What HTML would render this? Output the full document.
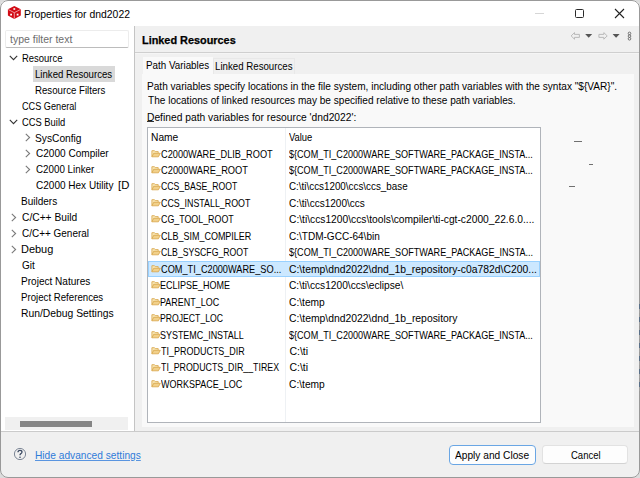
<!DOCTYPE html>
<html><head><meta charset="utf-8">
<style>
html,body{margin:0;padding:0;}
body{width:640px;height:478px;position:relative;overflow:hidden;background:#dcdcdc;font-family:"Liberation Sans",sans-serif;}
.win{position:absolute;left:0;top:0;width:640px;height:478px;border-radius:8px;background:#f0f0f0;overflow:hidden;}
.bord{position:absolute;left:0;top:0;width:640px;height:478px;box-sizing:border-box;border:1px solid #999;border-radius:8px;}
.a{position:absolute;box-sizing:border-box;}
.t{position:absolute;white-space:pre;line-height:24px;height:24px;transform-origin:0 0;font-family:"Liberation Sans",sans-serif;}
</style></head><body>
<div class="win">
  <div class="a" style="left:0;top:0;width:640px;height:26px;background:#fff;"></div>
  <div class="a" style="left:0;top:26px;width:134px;height:405px;background:#fff;"></div>
  <div class="a" style="left:134px;top:26px;width:1px;height:405px;background:#c4c4c4;"></div>
<!-- absolute coords relative to body -->
<svg class="a" style="left:7px;top:5px" width="15" height="15" viewBox="0 0 15 15"><path d="M7.3 0.9 L13.8 4.3 L13.8 10.5 L7.3 13.9 L0.9 10.5 L0.9 4.3 Z" fill="#d20a14"/><path d="M1.2 4.5 L7.3 7.7 L13.5 4.5 M7.3 7.7 V13.6" fill="none" stroke="#f7b9bc" stroke-width="0.8"/><rect x="6.4" y="3.2" width="1.8" height="1.6" fill="#fff"/><rect x="3.2" y="8.7" width="1.8" height="1.8" fill="#fff"/><rect x="9.7" y="8.7" width="1.8" height="1.8" fill="#fff"/></svg>
<!-- window controls -->
<div class="a" style="left:535px;top:13px;width:9px;height:1px;background:#d6d6d6;"></div>
<div class="a" style="left:574.5px;top:8.5px;width:9px;height:9px;border:1.1px solid #2b2b2b;border-radius:1.5px;"></div>
<svg class="a" style="left:614px;top:8px" width="11" height="11" viewBox="0 0 11 11"><path d="M1 1 L10 10 M10 1 L1 10" stroke="#222" stroke-width="1.1"/></svg>

<!-- right panel -->
<div class="a" style="left:135px;top:26px;width:505px;height:405px;background:#f0f0f0;"></div>
<div class="a" style="left:135px;top:51.5px;width:504px;height:1.3px;background:#cfcfcf;"></div><div class="a" style="left:135px;top:53px;width:504px;height:1px;background:#f5f5f5;"></div>
<!-- nav icons -->
<svg class="a" style="left:570px;top:32px" width="64" height="10" viewBox="0 0 64 10">
  <path d="M1.1 3.9 L4.5 0.6 V2.4 H9.4 V5.4 H4.5 V7.2 Z" fill="none" stroke="#b4b4b4" stroke-width="0.9" stroke-linejoin="round"/>
  <path d="M15.2 2 L22.2 2 L18.7 5.8 Z" fill="#555"/>
  <path d="M37.2 3.9 L33.8 0.6 V2.4 H28.9 V5.4 H33.8 V7.2 Z" fill="none" stroke="#b4b4b4" stroke-width="0.9" stroke-linejoin="round"/>
  <path d="M42.6 2 L49.6 2 L46.1 5.8 Z" fill="#555"/>
</svg>
<svg class="a" style="left:626px;top:31px" width="7" height="11" viewBox="0 0 7 11">
  <circle cx="3.5" cy="2.4" r="1.3" fill="none" stroke="#666" stroke-width="0.9"/>
  <circle cx="3.5" cy="5.1" r="1.3" fill="none" stroke="#666" stroke-width="0.9"/>
  <circle cx="3.5" cy="7.8" r="1.3" fill="none" stroke="#666" stroke-width="0.9"/>
</svg>
<!-- tab folder -->
<div class="a" style="left:142px;top:74px;width:492px;height:353px;background:#f9f9f9;"></div>
<div class="a" style="left:143px;top:57px;width:70px;height:17px;background:#f9f9f9;"></div>
<div class="a" style="left:213px;top:58px;width:82px;height:16px;background:#f0f0f0;border:1px solid #e8e8e8;border-bottom:none;"></div>
<!-- table -->
<div class="a" style="left:147px;top:127px;width:394px;height:296px;background:#fff;border:1px solid #b0b4ba;"></div>
<div class="a" style="left:285px;top:128px;width:1px;height:294px;background:#eef1f4;"></div>
<div class="a" style="left:148px;top:261px;width:392px;height:16px;background:#cce8ff;border:1px solid #99d1ff;"></div>
<!-- folders -->
<svg class="a" style="left:150.5px;top:149.60px" width="10" height="8" viewBox="0 0 10 8"><path d="M0.9 6.7 V0.7 H3.5 L4.4 1.6 H7.2 V3.2" fill="#f8e6b4" stroke="#d9a84e" stroke-width="0.85"/><path d="M0.9 6.8 L2.7 3.3 H9.3 L7.4 6.8 Z" fill="#f1d08a" stroke="#d9a84e" stroke-width="0.85"/></svg>
<svg class="a" style="left:150.5px;top:166.06px" width="10" height="8" viewBox="0 0 10 8"><path d="M0.9 6.7 V0.7 H3.5 L4.4 1.6 H7.2 V3.2" fill="#f8e6b4" stroke="#d9a84e" stroke-width="0.85"/><path d="M0.9 6.8 L2.7 3.3 H9.3 L7.4 6.8 Z" fill="#f1d08a" stroke="#d9a84e" stroke-width="0.85"/></svg>
<svg class="a" style="left:150.5px;top:182.52px" width="10" height="8" viewBox="0 0 10 8"><path d="M0.9 6.7 V0.7 H3.5 L4.4 1.6 H7.2 V3.2" fill="#f8e6b4" stroke="#d9a84e" stroke-width="0.85"/><path d="M0.9 6.8 L2.7 3.3 H9.3 L7.4 6.8 Z" fill="#f1d08a" stroke="#d9a84e" stroke-width="0.85"/></svg>
<svg class="a" style="left:150.5px;top:198.98px" width="10" height="8" viewBox="0 0 10 8"><path d="M0.9 6.7 V0.7 H3.5 L4.4 1.6 H7.2 V3.2" fill="#f8e6b4" stroke="#d9a84e" stroke-width="0.85"/><path d="M0.9 6.8 L2.7 3.3 H9.3 L7.4 6.8 Z" fill="#f1d08a" stroke="#d9a84e" stroke-width="0.85"/></svg>
<svg class="a" style="left:150.5px;top:215.44px" width="10" height="8" viewBox="0 0 10 8"><path d="M0.9 6.7 V0.7 H3.5 L4.4 1.6 H7.2 V3.2" fill="#f8e6b4" stroke="#d9a84e" stroke-width="0.85"/><path d="M0.9 6.8 L2.7 3.3 H9.3 L7.4 6.8 Z" fill="#f1d08a" stroke="#d9a84e" stroke-width="0.85"/></svg>
<svg class="a" style="left:150.5px;top:231.90px" width="10" height="8" viewBox="0 0 10 8"><path d="M0.9 6.7 V0.7 H3.5 L4.4 1.6 H7.2 V3.2" fill="#f8e6b4" stroke="#d9a84e" stroke-width="0.85"/><path d="M0.9 6.8 L2.7 3.3 H9.3 L7.4 6.8 Z" fill="#f1d08a" stroke="#d9a84e" stroke-width="0.85"/></svg>
<svg class="a" style="left:150.5px;top:248.36px" width="10" height="8" viewBox="0 0 10 8"><path d="M0.9 6.7 V0.7 H3.5 L4.4 1.6 H7.2 V3.2" fill="#f8e6b4" stroke="#d9a84e" stroke-width="0.85"/><path d="M0.9 6.8 L2.7 3.3 H9.3 L7.4 6.8 Z" fill="#f1d08a" stroke="#d9a84e" stroke-width="0.85"/></svg>
<svg class="a" style="left:150.5px;top:264.82px" width="10" height="8" viewBox="0 0 10 8"><path d="M0.9 6.7 V0.7 H3.5 L4.4 1.6 H7.2 V3.2" fill="#f8e6b4" stroke="#d9a84e" stroke-width="0.85"/><path d="M0.9 6.8 L2.7 3.3 H9.3 L7.4 6.8 Z" fill="#f1d08a" stroke="#d9a84e" stroke-width="0.85"/></svg>
<svg class="a" style="left:150.5px;top:281.28px" width="10" height="8" viewBox="0 0 10 8"><path d="M0.9 6.7 V0.7 H3.5 L4.4 1.6 H7.2 V3.2" fill="#f8e6b4" stroke="#d9a84e" stroke-width="0.85"/><path d="M0.9 6.8 L2.7 3.3 H9.3 L7.4 6.8 Z" fill="#f1d08a" stroke="#d9a84e" stroke-width="0.85"/></svg>
<svg class="a" style="left:150.5px;top:297.74px" width="10" height="8" viewBox="0 0 10 8"><path d="M0.9 6.7 V0.7 H3.5 L4.4 1.6 H7.2 V3.2" fill="#f8e6b4" stroke="#d9a84e" stroke-width="0.85"/><path d="M0.9 6.8 L2.7 3.3 H9.3 L7.4 6.8 Z" fill="#f1d08a" stroke="#d9a84e" stroke-width="0.85"/></svg>
<svg class="a" style="left:150.5px;top:314.20px" width="10" height="8" viewBox="0 0 10 8"><path d="M0.9 6.7 V0.7 H3.5 L4.4 1.6 H7.2 V3.2" fill="#f8e6b4" stroke="#d9a84e" stroke-width="0.85"/><path d="M0.9 6.8 L2.7 3.3 H9.3 L7.4 6.8 Z" fill="#f1d08a" stroke="#d9a84e" stroke-width="0.85"/></svg>
<svg class="a" style="left:150.5px;top:330.66px" width="10" height="8" viewBox="0 0 10 8"><path d="M0.9 6.7 V0.7 H3.5 L4.4 1.6 H7.2 V3.2" fill="#f8e6b4" stroke="#d9a84e" stroke-width="0.85"/><path d="M0.9 6.8 L2.7 3.3 H9.3 L7.4 6.8 Z" fill="#f1d08a" stroke="#d9a84e" stroke-width="0.85"/></svg>
<svg class="a" style="left:150.5px;top:347.12px" width="10" height="8" viewBox="0 0 10 8"><path d="M0.9 6.7 V0.7 H3.5 L4.4 1.6 H7.2 V3.2" fill="#f8e6b4" stroke="#d9a84e" stroke-width="0.85"/><path d="M0.9 6.8 L2.7 3.3 H9.3 L7.4 6.8 Z" fill="#f1d08a" stroke="#d9a84e" stroke-width="0.85"/></svg>
<svg class="a" style="left:150.5px;top:363.58px" width="10" height="8" viewBox="0 0 10 8"><path d="M0.9 6.7 V0.7 H3.5 L4.4 1.6 H7.2 V3.2" fill="#f8e6b4" stroke="#d9a84e" stroke-width="0.85"/><path d="M0.9 6.8 L2.7 3.3 H9.3 L7.4 6.8 Z" fill="#f1d08a" stroke="#d9a84e" stroke-width="0.85"/></svg>
<svg class="a" style="left:150.5px;top:380.04px" width="10" height="8" viewBox="0 0 10 8"><path d="M0.9 6.7 V0.7 H3.5 L4.4 1.6 H7.2 V3.2" fill="#f8e6b4" stroke="#d9a84e" stroke-width="0.85"/><path d="M0.9 6.8 L2.7 3.3 H9.3 L7.4 6.8 Z" fill="#f1d08a" stroke="#d9a84e" stroke-width="0.85"/></svg>
<!-- dashes -->
<div class="a" style="left:574px;top:140.5px;width:8px;height:1.3px;background:#707070;"></div>
<div class="a" style="left:589px;top:163.5px;width:4px;height:1.3px;background:#707070;"></div>
<div class="a" style="left:569px;top:186px;width:6px;height:1.3px;background:#707070;"></div>

<!-- left panel details -->
<div class="a" style="left:5px;top:30px;width:124px;height:18px;background:#fff;border:1px solid #ececec;border-bottom:1px solid #bcbcbc;border-radius:2px;"></div>
<div class="a" style="left:33px;top:66px;width:82px;height:16px;background:#d9d9d9;"></div>
<svg class="a" style="left:9.2px;top:55.3px" width="9" height="6" viewBox="0 0 9 6"><path d="M0.8 0.8 L4.5 4.6 L8.2 0.8" fill="none" stroke="#333" stroke-width="1.1"/></svg>
<svg class="a" style="left:9.2px;top:119.2px" width="9" height="6" viewBox="0 0 9 6"><path d="M0.8 0.8 L4.5 4.6 L8.2 0.8" fill="none" stroke="#333" stroke-width="1.1"/></svg>
<svg class="a" style="left:25.2px;top:133.3px" width="6" height="9" viewBox="0 0 6 9"><path d="M0.8 0.8 L4.6 4.5 L0.8 8.2" fill="none" stroke="#7a7a7a" stroke-width="1.1"/></svg>
<svg class="a" style="left:25.2px;top:149.24px" width="6" height="9" viewBox="0 0 6 9"><path d="M0.8 0.8 L4.6 4.5 L0.8 8.2" fill="none" stroke="#7a7a7a" stroke-width="1.1"/></svg>
<svg class="a" style="left:25.2px;top:165.18px" width="6" height="9" viewBox="0 0 6 9"><path d="M0.8 0.8 L4.6 4.5 L0.8 8.2" fill="none" stroke="#7a7a7a" stroke-width="1.1"/></svg>
<svg class="a" style="left:11.3px;top:213.0px" width="6" height="9" viewBox="0 0 6 9"><path d="M0.8 0.8 L4.6 4.5 L0.8 8.2" fill="none" stroke="#7a7a7a" stroke-width="1.1"/></svg>
<svg class="a" style="left:11.3px;top:228.94px" width="6" height="9" viewBox="0 0 6 9"><path d="M0.8 0.8 L4.6 4.5 L0.8 8.2" fill="none" stroke="#7a7a7a" stroke-width="1.1"/></svg>
<svg class="a" style="left:11.3px;top:244.88px" width="6" height="9" viewBox="0 0 6 9"><path d="M0.8 0.8 L4.6 4.5 L0.8 8.2" fill="none" stroke="#7a7a7a" stroke-width="1.1"/></svg>
<div class="a" style="left:5px;top:417px;width:123px;height:13px;background:#f0f0f0;"></div>
<div class="a" style="left:20px;top:421px;width:72px;height:6px;background:#858585;"></div>

<!-- bottom -->
<div class="a" style="left:1px;top:431px;width:638px;height:1px;background:#cbcbcb;"></div>
<svg class="a" style="left:13px;top:447px" width="14" height="14" viewBox="0 0 14 14">
  <circle cx="7" cy="7" r="5.6" fill="none" stroke="#7d8796" stroke-width="1"/>
  <path d="M5 5.3 Q5 3.4 7 3.4 Q9 3.4 9 5.1 Q9 6.2 7.6 6.9 Q7 7.3 7 8.3" fill="none" stroke="#3b4a63" stroke-width="1.3"/>
  <circle cx="7" cy="10.2" r="0.8" fill="#3b4a63"/>
</svg>
<div class="a" style="left:449px;top:445px;width:87px;height:20px;background:#fdfdfd;border:1.5px solid #6aa6e4;border-radius:4px;"></div>
<div class="a" style="left:542px;top:445px;width:86px;height:19px;background:#fdfdfd;border:1px solid #e2e2e2;border-bottom-color:#d3d3d3;border-radius:4px;"></div>

<div class="a" style="left:147px;top:121px;width:7px;height:1px;background:#333;"></div>
<div class="t" style="left:24.41px;top:1.60px;font-size:10.5px;font-weight:400;color:#000;transform:scaleX(0.9924);">Properties for dnd2022</div>
<div class="t" style="left:10.40px;top:26.75px;font-size:10.5px;font-weight:400;color:#6d6d6d;transform:scaleX(0.9984);">type filter text</div>
<div class="t" style="left:21.90px;top:45.80px;font-size:10.5px;font-weight:400;color:#000;transform:scaleX(0.9000);">Resource</div>
<div class="t" style="left:35.28px;top:61.74px;font-size:10.5px;font-weight:400;color:#000;transform:scaleX(0.9181);">Linked Resources</div>
<div class="t" style="left:35.48px;top:77.68px;font-size:10.5px;font-weight:400;color:#000;transform:scaleX(0.9200);">Resource Filters</div>
<div class="t" style="left:22.40px;top:93.62px;font-size:10.5px;font-weight:400;color:#000;transform:scaleX(0.8710);">CCS General</div>
<div class="t" style="left:22.40px;top:109.56px;font-size:10.5px;font-weight:400;color:#000;transform:scaleX(0.8917);">CCS Build</div>
<div class="t" style="left:35.13px;top:125.50px;font-size:10.5px;font-weight:400;color:#000;transform:scaleX(0.9717);">SysConfig</div>
<div class="t" style="left:36.10px;top:141.44px;font-size:10.5px;font-weight:400;color:#000;transform:scaleX(0.9579);">C2000 Compiler</div>
<div class="t" style="left:36.10px;top:157.38px;font-size:10.5px;font-weight:400;color:#000;transform:scaleX(0.9323);">C2000 Linker</div>
<div class="t" style="left:36.10px;top:173.32px;font-size:10.5px;font-weight:400;color:#000;transform:scaleX(0.9543);">C2000 Hex Utility</div>
<div class="t" style="left:21.45px;top:189.26px;font-size:10.5px;font-weight:400;color:#000;transform:scaleX(0.9541);">Builders</div>
<div class="t" style="left:22.40px;top:205.20px;font-size:10.5px;font-weight:400;color:#000;transform:scaleX(0.9750);">C/C++ Build</div>
<div class="t" style="left:22.40px;top:221.14px;font-size:10.5px;font-weight:400;color:#000;transform:scaleX(0.9486);">C/C++ General</div>
<div class="t" style="left:21.36px;top:237.08px;font-size:10.5px;font-weight:400;color:#000;transform:scaleX(1.0448);">Debug</div>
<div class="t" style="left:22.40px;top:253.02px;font-size:10.5px;font-weight:400;color:#000;transform:scaleX(0.9538);">Git</div>
<div class="t" style="left:21.44px;top:268.96px;font-size:10.5px;font-weight:400;color:#000;transform:scaleX(0.9577);">Project Natures</div>
<div class="t" style="left:21.48px;top:284.90px;font-size:10.5px;font-weight:400;color:#000;transform:scaleX(0.9205);">Project References</div>
<div class="t" style="left:21.42px;top:300.84px;font-size:10.5px;font-weight:400;color:#000;transform:scaleX(0.9849);">Run/Debug Settings</div>
<div class="t" style="left:118.32px;top:173.32px;font-size:10.5px;font-weight:400;color:#000;transform:scaleX(1.0778);">[D</div>
<div class="t" style="left:141.66px;top:28.40px;font-size:10.5px;font-weight:700;color:#000;transform:scaleX(1.0360);-webkit-text-stroke:0.25px #000;">Linked Resources</div>
<div class="t" style="left:146.07px;top:52.90px;font-size:10.5px;font-weight:400;color:#000;transform:scaleX(0.9348);">Path Variables</div>
<div class="t" style="left:215.28px;top:54.10px;font-size:10.5px;font-weight:400;color:#000;transform:scaleX(0.9229);">Linked Resources</div>
<div class="t" style="left:147.24px;top:73.60px;font-size:10.5px;font-weight:400;color:#000;transform:scaleX(0.9605);">Path variables specify locations in the file system, including other path variables with the syntax &quot;${VAR}&quot;.</div>
<div class="t" style="left:148.20px;top:87.50px;font-size:10.5px;font-weight:400;color:#000;transform:scaleX(0.9587);">The locations of linked resources may be specified relative to these path variables.</div>
<div class="t" style="left:147.22px;top:104.60px;font-size:10.5px;font-weight:400;color:#000;transform:scaleX(0.9774);">Defined path variables for resource &#x27;dnd2022&#x27;:</div>
<div class="t" style="left:151.43px;top:124.70px;font-size:10.5px;font-weight:400;color:#000;transform:scaleX(0.9741);">Name</div>
<div class="t" style="left:289.15px;top:124.70px;font-size:10.5px;font-weight:400;color:#000;transform:scaleX(0.8942);">Value</div>
<div class="t" style="left:161.10px;top:141.50px;font-size:10.5px;font-weight:400;color:#000;transform:scaleX(0.8764);">C2000WARE_DLIB_ROOT</div>
<div class="t" style="left:289.40px;top:141.50px;font-size:10.5px;font-weight:400;color:#000;transform:scaleX(0.8635);">${COM_TI_C2000WARE_SOFTWARE_PACKAGE_INSTA...</div>
<div class="t" style="left:161.10px;top:157.96px;font-size:10.5px;font-weight:400;color:#000;transform:scaleX(0.8857);">C2000WARE_ROOT</div>
<div class="t" style="left:289.40px;top:157.96px;font-size:10.5px;font-weight:400;color:#000;transform:scaleX(0.8635);">${COM_TI_C2000WARE_SOFTWARE_PACKAGE_INSTA...</div>
<div class="t" style="left:161.10px;top:174.42px;font-size:10.5px;font-weight:400;color:#000;transform:scaleX(0.8266);">CCS_BASE_ROOT</div>
<div class="t" style="left:289.40px;top:174.42px;font-size:10.5px;font-weight:400;color:#000;transform:scaleX(0.9365);">C:\ti\ccs1200\ccs\ccs_base</div>
<div class="t" style="left:161.10px;top:190.88px;font-size:10.5px;font-weight:400;color:#000;transform:scaleX(0.8425);">CCS_INSTALL_ROOT</div>
<div class="t" style="left:289.40px;top:190.88px;font-size:10.5px;font-weight:400;color:#000;transform:scaleX(0.9557);">C:\ti\ccs1200\ccs</div>
<div class="t" style="left:161.10px;top:207.34px;font-size:10.5px;font-weight:400;color:#000;transform:scaleX(0.8436);">CG_TOOL_ROOT</div>
<div class="t" style="left:289.40px;top:207.34px;font-size:10.5px;font-weight:400;color:#000;transform:scaleX(0.9753);">C:\ti\ccs1200\ccs\tools\compiler\ti-cgt-c2000_22.6.0....</div>
<div class="t" style="left:161.10px;top:223.80px;font-size:10.5px;font-weight:400;color:#000;transform:scaleX(0.8552);">CLB_SIM_COMPILER</div>
<div class="t" style="left:289.40px;top:223.80px;font-size:10.5px;font-weight:400;color:#000;transform:scaleX(0.9547);">C:\TDM-GCC-64\bin</div>
<div class="t" style="left:161.10px;top:240.26px;font-size:10.5px;font-weight:400;color:#000;transform:scaleX(0.8267);">CLB_SYSCFG_ROOT</div>
<div class="t" style="left:289.40px;top:240.26px;font-size:10.5px;font-weight:400;color:#000;transform:scaleX(0.8645);">${COM_TI_C2000WARE_SOFTWARE_PACKAGE_INSTA...</div>
<div class="t" style="left:161.10px;top:256.72px;font-size:10.5px;font-weight:400;color:#000;transform:scaleX(0.8763);">COM_TI_C2000WARE_SO...</div>
<div class="t" style="left:289.40px;top:256.72px;font-size:10.5px;font-weight:400;color:#000;transform:scaleX(0.9876);">C:\temp\dnd2022\dnd_1b_repository-c0a782d\C200...</div>
<div class="t" style="left:160.24px;top:273.18px;font-size:10.5px;font-weight:400;color:#000;transform:scaleX(0.8569);">ECLIPSE_HOME</div>
<div class="t" style="left:289.40px;top:273.18px;font-size:10.5px;font-weight:400;color:#000;transform:scaleX(0.9695);">C:\ti\ccs1200\ccs\eclipse\</div>
<div class="t" style="left:160.25px;top:289.64px;font-size:10.5px;font-weight:400;color:#000;transform:scaleX(0.8537);">PARENT_LOC</div>
<div class="t" style="left:289.40px;top:289.64px;font-size:10.5px;font-weight:400;color:#000;transform:scaleX(0.9730);">C:\temp</div>
<div class="t" style="left:160.28px;top:306.10px;font-size:10.5px;font-weight:400;color:#000;transform:scaleX(0.8240);">PROJECT_LOC</div>
<div class="t" style="left:289.40px;top:306.10px;font-size:10.5px;font-weight:400;color:#000;transform:scaleX(0.9883);">C:\temp\dnd2022\dnd_1b_repository</div>
<div class="t" style="left:160.25px;top:322.56px;font-size:10.5px;font-weight:400;color:#000;transform:scaleX(0.8510);">SYSTEMC_INSTALL</div>
<div class="t" style="left:289.40px;top:322.56px;font-size:10.5px;font-weight:400;color:#000;transform:scaleX(0.8635);">${COM_TI_C2000WARE_SOFTWARE_PACKAGE_INSTA...</div>
<div class="t" style="left:161.10px;top:339.02px;font-size:10.5px;font-weight:400;color:#000;transform:scaleX(0.8551);">TI_PRODUCTS_DIR</div>
<div class="t" style="left:289.40px;top:339.02px;font-size:10.5px;font-weight:400;color:#000;transform:scaleX(1.0000);">C:\ti</div>
<div class="t" style="left:161.10px;top:355.48px;font-size:10.5px;font-weight:400;color:#000;transform:scaleX(0.8396);">TI_PRODUCTS_DIR__TIREX</div>
<div class="t" style="left:289.40px;top:355.48px;font-size:10.5px;font-weight:400;color:#000;transform:scaleX(1.0000);">C:\ti</div>
<div class="t" style="left:161.10px;top:371.94px;font-size:10.5px;font-weight:400;color:#000;transform:scaleX(0.8569);">WORKSPACE_LOC</div>
<div class="t" style="left:289.40px;top:371.94px;font-size:10.5px;font-weight:400;color:#000;transform:scaleX(0.9730);">C:\temp</div>
<div class="t" style="left:35.13px;top:442.80px;font-size:10.5px;font-weight:400;color:#2f7bd9;transform:scaleX(0.9694);text-decoration:underline;text-decoration-color:#5a95e0;">Hide advanced settings</div>
<div class="t" style="left:455.40px;top:443.00px;font-size:10.5px;font-weight:400;color:#000;transform:scaleX(0.9684);">Apply and Close</div>
<div class="t" style="left:571.40px;top:442.60px;font-size:10.5px;font-weight:400;color:#000;transform:scaleX(0.9062);">Cancel</div>
</div>
<div class="bord"></div>
<div class="a" style="left:639px;top:300px;width:1px;height:95px;background:repeating-linear-gradient(#9a9a9a 0 4px,#5a7088 4px 9px,#a0a0a0 9px 13px);"></div>
</body></html>
